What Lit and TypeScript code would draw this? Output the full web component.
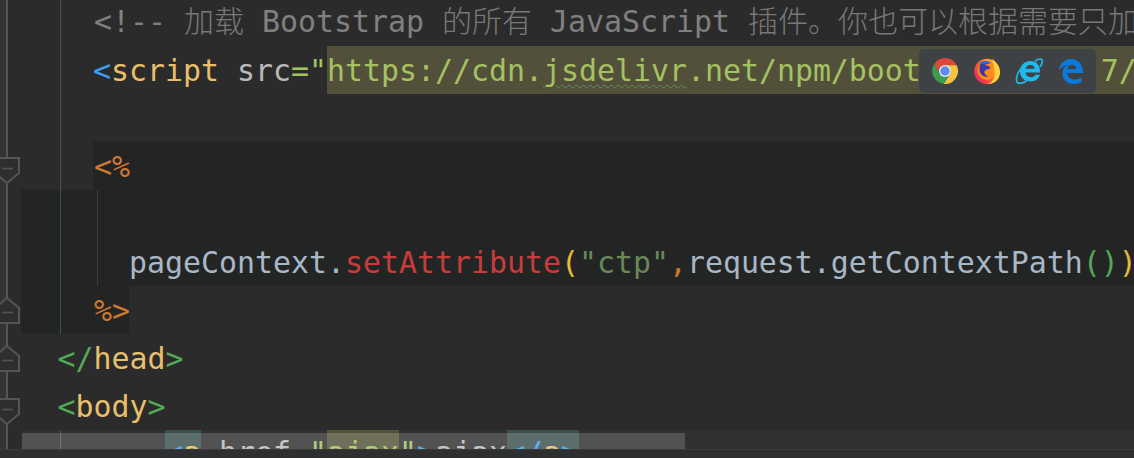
import { LitElement, html, css, svg } from "lit";
import { customElement } from "lit/decorators.js";

const foldDown = (top: number) => svg`<path class="fold" d="M-5 ${top}H19V${top + 15}L7 ${top + 25}L-5 ${top + 15}Z"/><path class="minus" d="M2 ${top + 10.5}H13"/>`;
const foldUp = (tip: number) => svg`<path class="fold" d="M7 ${tip}L19 ${tip + 10}V${tip + 25}H-5V${tip + 10}Z"/><path class="minus" d="M2 ${tip + 14.5}H13"/>`;

@customElement("app-root")
export class AppRoot extends LitElement {
  static styles = css`
    :host { display: block; width: 1134px; height: 458px; overflow: hidden; position: relative; background: #2b2b2b; }
    .frame { display: flex; height: 449px; overflow: hidden; }
    .gutter { flex: 0 0 21px; width: 21px; height: 449px; display: block; overflow: hidden; }
    .gutter .strip { fill: #313335; }
    .gutter .stem { stroke: #555; stroke-width: 2; }
    .fold { fill: #2d2e2f; stroke: #555; stroke-width: 2; }
    .minus { stroke: #555; stroke-width: 1.6; }
    .editor { flex: 1; min-width: 0; margin-top: -2px; font-family: "DejaVu Sans Mono", "Liberation Mono", "Noto Sans CJK SC", monospace; font-size: 29.9px; color: #a9b7c6; }
    .line { height: 48px; line-height: 49px; white-space: pre; overflow: hidden; padding-left: 72px; box-sizing: border-box; }
    .line.comment { padding-left: 73px; line-height: 48px; }
    .line.out1 { padding-left: 36.5px; }
    .line.deep { padding-left: 144px; background: #2f3030; line-height: 46px; }
    .line.jsp-open { background: #232525; margin-left: 72px; padding-left: 1px; }
    .line.jsp { background: #232525; }
    .line.jsp-code { padding-left: 108px; }
    .line.jsp-close { width: 108px; padding-left: 73px; }
    .cjk { font-family: "Noto Sans CJK SC", sans-serif; font-size: 30px; line-height: 1; font-weight: 300; color: #787878; }
    .cm { color: #808080; }
    .bl { color: #3d9ff0; }
    .tag { color: #e8bf6a; }
    .at { color: #bababa; }
    .st { color: #a5c261; }
    .hl { background: #52503a; display: inline-block; height: 48px; vertical-align: top; }
    .wavy { text-decoration: underline wavy #5e8f63 1px; text-underline-offset: 3px; }
    .jspt { color: #cc7832; }
    .gr { color: #54a857; }
    .red { color: #c93c3c; }
    .ye { color: #e8ba36; }
    .dst { color: #6a8759; }
    .olive { background: #535238; display: inline-block; height: 48px; vertical-align: top; }
    .teal { background: #3b514f; display: inline-block; height: 48px; vertical-align: top; }
    .guide { position: absolute; width: 1px; }
    .guide.g1 { left: 60px; top: 0; height: 334px; background: #415639; }
    .guide.g2 { left: 60px; top: 430px; height: 19px; background: #4b5d46; }
    .guide.g3 { left: 97px; top: 190px; height: 96px; background: #3b3d3d; }
    .popup { position: absolute; left: 919px; top: 49px; width: 177px; height: 44px; box-sizing: border-box; padding-left: 13px; border-radius: 5px; background: #3e4244; display: flex; align-items: center; gap: 16px; }
    .popup svg { width: 26px; height: 26px; display: block; overflow: visible; }
    .hscroll { position: absolute; left: 22px; top: 433px; width: 663px; height: 16px; background: rgba(255, 255, 255, 0.17); }
    .bottom { height: 9px; box-sizing: border-box; border-top: 1px solid #3b3b3b; background: #2e2f31; }
  `;

  render() {
    return html`
      <div class="frame">
        <svg class="gutter" viewBox="0 0 21 449">
          <rect class="strip" x="0" y="0" width="6" height="449"/>
          <path class="stem" d="M7 0V449"/>
          ${foldDown(158)}
          ${foldUp(298)}
          ${foldUp(346)}
          ${foldDown(399)}
        </svg>
        <div class="editor">
          <div class="line comment cm">&lt;!-- <span class="cjk">加载</span> Bootstrap <span class="cjk">的所有</span> JavaScript <span class="cjk">插件。你也可以根据需要只加载</span></div>
          <div class="line"><span class="bl">&lt;</span><span class="tag">script</span> <span class="at">src</span><span class="st">="</span><span class="hl st">https://cdn.<span class="wavy">jsdelivr</span>.net/npm/bootstrap@3.3.7/dist/js/bootstrap.min.js</span></div>
          <div class="line"></div>
          <div class="line jsp-open jspt">&lt;%</div>
          <div class="line jsp"></div>
          <div class="line jsp jsp-code">pageContext.<span class="red">setAttribute</span><span class="ye">(</span><span class="dst">"ctp"</span><span class="jspt">,</span>request.getContextPath<span class="gr">()</span><span class="ye">)</span></div>
          <div class="line jsp jsp-close jspt">%&gt;</div>
          <div class="line out1"><span class="gr">&lt;/</span><span class="tag">head</span><span class="gr">&gt;</span></div>
          <div class="line out1"><span class="gr">&lt;</span><span class="tag">body</span><span class="gr">&gt;</span></div>
          <div class="line deep"><span class="teal"><span class="bl">&lt;</span><span class="tag">a</span></span> <span class="at">href</span><span class="st">="</span><span class="olive st">ajax</span><span class="st">"</span><span class="bl">&gt;</span><span class="at">ajax</span><span class="teal"><span class="bl">&lt;/</span><span class="tag">a</span><span class="bl">&gt;</span></span></div>
        </div>
      </div>
      <div class="bottom"></div>
      <div class="guide g1"></div>
      <div class="guide g2"></div>
      <div class="guide g3"></div>
      <div class="hscroll"></div>
      <div class="popup">
        <svg viewBox="0 0 26 26">
          <path fill="#d9483b" d="M13 0A13 13 0 0 1 24.7 7.3L13 7.3A6 6 0 0 0 7.8 16L2.2 6A13 13 0 0 1 13 0Z"/>
          <path fill="#f4c340" d="M24.7 7.3A13 13 0 0 1 11.6 25.9L17.9 16A6 6 0 0 0 13 7.3Z"/>
          <path fill="#3d9a50" d="M2.2 6L7.8 16A6 6 0 0 0 17.9 16L11.6 25.9A13 13 0 0 1 2.2 6Z"/>
          <circle cx="13" cy="13" r="6" fill="#eef1f5"/>
          <circle cx="13" cy="13" r="4.7" fill="#5a8dee"/>
        </svg>
        <svg viewBox="0 0 26 26">
          <defs>
            <linearGradient id="ff" x1="0.1" y1="0.9" x2="0.9" y2="0.2">
              <stop offset="0" stop-color="#e3256b"/>
              <stop offset="0.45" stop-color="#ff5a2c"/>
              <stop offset="1" stop-color="#ffb52a"/>
            </linearGradient>
          </defs>
          <circle cx="13" cy="13.5" r="12.8" fill="url(#ff)"/>
          <circle cx="13" cy="12.5" r="9.5" fill="#ff8a1c"/>
          <path fill="#ffd33d" d="M18.5 0C19.5 3 25.8 7 26 14C26.2 20.5 21 26 14 26C19 24 21.5 19 20.5 13C20 9 19.5 5 18.5 0Z"/>
          <path fill="#3b3ba8" d="M7 4C10 2.5 15 3 17 5C14 5.5 12 6 10.5 7.5C13 7 15.5 8 16.5 10C15 11.5 12.5 11 11 12.5C9.5 14 11 17.5 14.5 18.5C11 19.5 7 17.5 5.8 14C5 11 5.5 7 7 4Z"/>
          <path fill="#2f6fe0" d="M7 4C10 2.5 15 3 17 5C13 5 10 5.5 6.3 6.5Z"/>
        </svg>
        <svg viewBox="0 0 26 26">
          <path fill="#1fb9ee" fill-rule="evenodd" d="M24 14.5L9.5 14.5C9.8 17.5 12 19.2 15 19.2C17.2 19.2 18.7 18.3 19.5 16.8L24 16.8C22.6 21 19.3 23.5 14.6 23.5C8.5 23.5 4 19.5 4 13.2C4 7.3 8.5 3 14.6 3C20.8 3 24.4 7.5 24 14.5ZM9.6 10.8L18.8 10.8C18.6 8.4 17 6.9 14.4 6.9C12 6.9 10.1 8.4 9.6 10.8Z"/>
          <path fill="none" stroke="#1fb9ee" stroke-width="1.7" d="M19 3C23 0.5 26.5 0 26.3 3.5C26.2 5 25.5 7 24 9M4.5 11C1.5 15 -0.5 21 1 24C2.5 26.5 7 25 10.5 23"/>
        </svg>
        <svg viewBox="0 0 26 26">
          <path fill="#0a7bdc" fill-rule="evenodd" d="M1 12C2 5 7 1 13 1C20 1 25 6 25 15L9 15C9.5 19 12.5 21.5 16.5 21.5C19 21.5 21.5 20.8 23.5 19.5L23.5 24C21 25.5 18 26 15.5 26C9 26 4.5 21.5 4.5 15.5C4.5 11.5 7 8 10.5 6.5C6 7.5 3 9.5 1 12ZM9.2 11L18.5 11C18.3 8.3 16.5 6.7 14 6.7C11.6 6.7 9.7 8.6 9.2 11Z"/>
        </svg>
      </div>
    `;
  }
}
